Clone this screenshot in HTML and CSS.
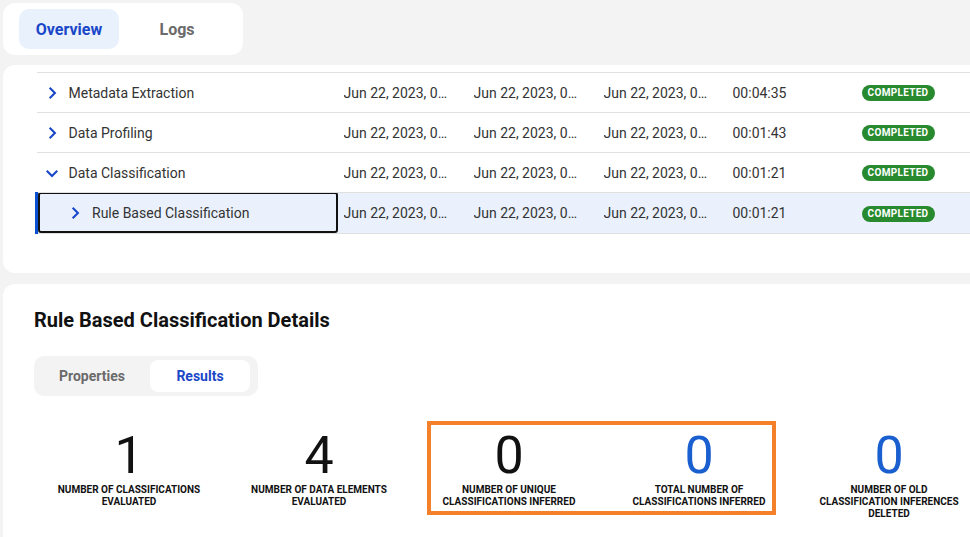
FILE: index.html
```html
<!DOCTYPE html>
<html lang="en">

<head>
    <meta charset="UTF-8">
    <meta name="viewport" content="width=device-width, initial-scale=1.0">
    <title>Job Overview</title>
    <link rel="stylesheet" href="styles.css">
</head>

<body>
    <div class="tabs-card">
        <button class="tab active">Overview</button>
        <button class="tab">Logs</button>
    </div>

    <div class="card task-card">
        <table class="task-table">
            <tbody>
                <tr>
                    <td class="name-cell">
                        <div class="name-inner">
                            <svg class="chev" viewBox="0 0 12 12"><path d="M4 1.5 L8.5 6 L4 10.5"/></svg>
                            Metadata Extraction
                        </div>
                    </td>
                    <td><span class="trunc">Jun 22, 2023, 04:12:33 PM</span></td>
                    <td><span class="trunc">Jun 22, 2023, 04:12:33 PM</span></td>
                    <td><span class="trunc">Jun 22, 2023, 04:17:08 PM</span></td>
                    <td>00:04:35</td>
                    <td><span class="badge">Completed</span></td>
                    <td></td>
                </tr>
                <tr>
                    <td class="name-cell">
                        <div class="name-inner">
                            <svg class="chev" viewBox="0 0 12 12"><path d="M4 1.5 L8.5 6 L4 10.5"/></svg>
                            Data Profiling
                        </div>
                    </td>
                    <td><span class="trunc">Jun 22, 2023, 04:17:09 PM</span></td>
                    <td><span class="trunc">Jun 22, 2023, 04:17:09 PM</span></td>
                    <td><span class="trunc">Jun 22, 2023, 04:18:52 PM</span></td>
                    <td>00:01:43</td>
                    <td><span class="badge">Completed</span></td>
                    <td></td>
                </tr>
                <tr>
                    <td class="name-cell">
                        <div class="name-inner">
                            <svg class="chev" viewBox="0 0 12 12"><path d="M1.5 4 L6 8.5 L10.5 4"/></svg>
                            Data Classification
                        </div>
                    </td>
                    <td><span class="trunc">Jun 22, 2023, 04:18:53 PM</span></td>
                    <td><span class="trunc">Jun 22, 2023, 04:18:53 PM</span></td>
                    <td><span class="trunc">Jun 22, 2023, 04:20:14 PM</span></td>
                    <td>00:01:21</td>
                    <td><span class="badge">Completed</span></td>
                    <td></td>
                </tr>
                <tr class="selected">
                    <td class="name-cell">
                        <div class="name-inner child">
                            <svg class="chev" viewBox="0 0 12 12"><path d="M4 1.5 L8.5 6 L4 10.5"/></svg>
                            Rule Based Classification
                        </div>
                    </td>
                    <td><span class="trunc">Jun 22, 2023, 04:18:53 PM</span></td>
                    <td><span class="trunc">Jun 22, 2023, 04:18:53 PM</span></td>
                    <td><span class="trunc">Jun 22, 2023, 04:20:14 PM</span></td>
                    <td>00:01:21</td>
                    <td><span class="badge">Completed</span></td>
                    <td></td>
                </tr>
            </tbody>
        </table>
    </div>

    <div class="card details-card">
        <h2>Rule Based Classification Details</h2>

        <div class="segmented">
            <button class="seg">Properties</button>
            <button class="seg active">Results</button>
        </div>

        <div class="stats">
            <div class="stat">
                <div class="stat-value">1</div>
                <div class="stat-label">Number of classifications<br>evaluated</div>
            </div>
            <div class="stat">
                <div class="stat-value">4</div>
                <div class="stat-label">Number of data elements<br>evaluated</div>
            </div>
            <div class="stat">
                <div class="stat-value">0</div>
                <div class="stat-label">Number of unique<br>classifications inferred</div>
            </div>
            <div class="stat">
                <div class="stat-value link">0</div>
                <div class="stat-label">Total number of<br>classifications inferred</div>
            </div>
            <div class="stat">
                <div class="stat-value link">0</div>
                <div class="stat-label">Number of old<br>classification inferences<br>deleted</div>
            </div>
            <div class="highlight"></div>
        </div>
    </div>
</body>

</html>
```

FILE: styles.css
```css
body {
    margin: 0;
    background-color: #f3f3f3;
    font-family: Roboto, "Liberation Sans", sans-serif;
    color: #333;
    overflow: hidden;
    width: 970px;
    height: 537px;
}

button {
    font-family: inherit;
    border: none;
    cursor: pointer;
}

.tabs-card {
    display: flex;
    gap: 8px;
    width: 208px;
    margin: 3px 0 0 3px;
    padding: 6px 16px;
    background-color: white;
    border-radius: 12px;
}

.tab {
    width: 100px;
    height: 40px;
    background: none;
    border-radius: 10px;
    font-size: 16px;
    font-weight: 700;
    color: #6b6b6b;
}

.tab.active {
    background-color: #e9f1fd;
    color: #1a47c8;
}

.card {
    background-color: white;
    margin-left: 3px;
    width: 935px;
}

.task-card {
    margin-top: 10px;
    height: 201px;
    padding: 7px 0 0 32px;
    border-radius: 12px 0 0 12px;
}

.task-table {
    border-collapse: collapse;
    width: 935px;
    table-layout: fixed;
    font-size: 14px;
}

.task-table tr {
    border-top: 1px solid #e0e0e0;
    border-bottom: 1px solid #e0e0e0;
}

.task-table td {
    height: 39px;
    padding: 0 0 0 6px;
    white-space: nowrap;
    color: #333;
}

.task-table td.name-cell {
    width: 301px;
    padding: 0;
}

.task-table td:nth-child(2),
.task-table td:nth-child(3),
.task-table td:nth-child(4) {
    width: 124px;
}

.task-table td:nth-child(5) {
    width: 125px;
    padding-left: 5px;
}

.task-table td:nth-child(6) {
    width: 96px;
    padding-left: 4px;
}

.trunc {
    display: block;
    width: 106px;
    overflow: hidden;
    text-overflow: ellipsis;
}

.name-inner {
    display: flex;
    align-items: center;
    gap: 10px;
    height: 39px;
    padding-left: 8px;
}

.chev {
    width: 14px;
    height: 14px;
    fill: none;
    stroke: #1a47c8;
    stroke-width: 1.8;
}

.selected {
    background-color: #eaf1fc;
}

.selected td.name-cell {
    border-left: 3px solid #0b4fd1;
}

.name-inner.child {
    height: 37px;
    width: 268px;
    margin-top: -1px;
    padding-left: 28px;
    border: 2px solid #111;
    border-radius: 3px;
}

.badge {
    display: inline-block;
    width: 73px;
    height: 16px;
    line-height: 16px;
    border-radius: 8px;
    background-color: #288a2e;
    color: white;
    font-size: 10px;
    font-weight: 700;
    text-align: center;
    text-transform: uppercase;
    letter-spacing: 0.3px;
    vertical-align: middle;
}

.details-card {
    margin-top: 11px;
    height: 228px;
    padding: 25px 0 0 31px;
    border-radius: 12px 0 0 0;
    width: 936px;
    overflow: hidden;
}

.details-card h2 {
    margin: 0;
    font-size: 20px;
    line-height: 22px;
    font-weight: 700;
    color: #111;
}

.segmented {
    display: flex;
    gap: 8px;
    width: 208px;
    margin-top: 25px;
    padding: 4px 8px;
    background-color: #f3f3f3;
    border-radius: 10px;
}

.seg {
    width: 100px;
    height: 32px;
    background: none;
    border-radius: 8px;
    font-size: 14px;
    font-weight: 700;
    color: #6b6b6b;
}

.seg.active {
    background-color: white;
    color: #1a47c8;
}

.stats {
    position: relative;
    display: flex;
    width: 950px;
    margin-top: 25px;
    padding-top: 9px;
}

.stat {
    flex: 0 0 190px;
    text-align: center;
}

.stat-value {
    font-size: 52px;
    line-height: 52px;
    font-weight: 400;
    color: #111;
}

.stat-value.link {
    color: #1a5fd0;
}

.stat-label {
    margin-top: 2px;
    font-size: 10px;
    line-height: 12px;
    font-weight: 700;
    text-transform: uppercase;
    color: #111;
}

.highlight {
    position: absolute;
    left: 393px;
    top: 0;
    width: 341px;
    height: 86px;
    border: 4px solid #f5802a;
}
```
